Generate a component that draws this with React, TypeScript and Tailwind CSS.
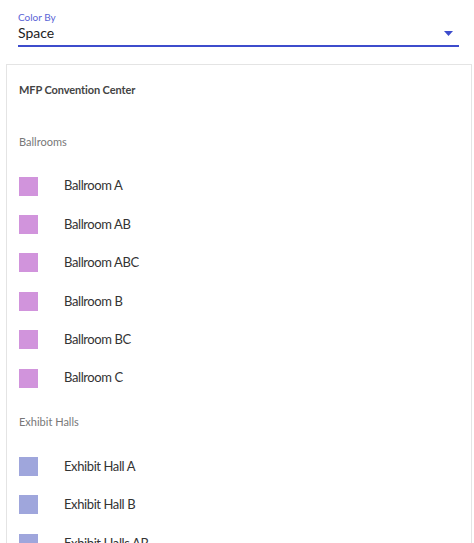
import React from 'react';

const groups = [
  {
    name: 'Ballrooms',
    color: 'bg-[#d194dc]',
    items: ['Ballroom A', 'Ballroom AB', 'Ballroom ABC', 'Ballroom B', 'Ballroom BC', 'Ballroom C'],
  },
  {
    name: 'Exhibit Halls',
    color: 'bg-[#9fa6dc]',
    items: ['Exhibit Hall A', 'Exhibit Hall B', 'Exhibit Halls AB', 'Exhibit Halls BC'],
  },
];

export default function App() {
  return (
    <div className="w-[474px] h-[543px] overflow-hidden bg-white font-['Lato','Open_Sans',sans-serif] text-[#333]">
      {/* Color By select */}
      <div className="ml-[18px] mr-[15px] pt-[11px]">
        <div className="text-[10px] leading-[12px] text-[#5a64d6]">Color By</div>
        <div className="flex items-center justify-between border-b-2 border-[#3d4ccc] pb-[2px] pr-[6px]">
          <span className="text-[14px] leading-[20px] text-[#222]">Space</span>
          <svg width="9" height="5" viewBox="0 0 9 5" className="mt-[1px]">
            <path d="M0 0 L9 0 L4.5 5 Z" fill="#3d4ccc" />
          </svg>
        </div>
      </div>

      {/* Legend card */}
      <div className="ml-[6px] mr-[2px] mt-[17px] border border-[#e4e4e4] px-[12px] pt-[17px] h-[600px]">
        <div className="text-[11px] leading-[16px] font-bold text-[#444] tracking-[-0.1px]">MFP Convention Center</div>
        {groups.map((g, gi) => (
          <div key={g.name} className={gi === 0 ? 'mt-[36px]' : 'mt-[17px]'}>
            <div className="text-[11px] leading-[16px] text-[#777]">{g.name}</div>
            <div className="mt-[17px]">
              {g.items.map((item) => (
                <div key={item} className="flex items-center h-[38.4px]">
                  <div className={`w-[19px] h-[19px] ${g.color}`} />
                  <span className="ml-[26px] text-[13px] tracking-[-0.4px] text-[#333]">{item}</span>
                </div>
              ))}
            </div>
          </div>
        ))}
      </div>
    </div>
  );
}
